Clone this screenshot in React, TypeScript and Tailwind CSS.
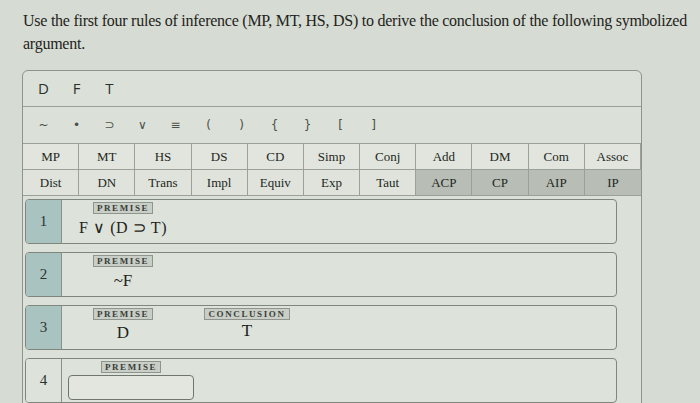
const letters = ['D', 'F', 'T']
const symbols = ['~', '•', '⊃', '∨', '≡', '(', ')', '{', '}', '[', ']']
const rulesTop = ['MP', 'MT', 'HS', 'DS', 'CD', 'Simp', 'Conj', 'Add', 'DM', 'Com', 'Assoc']
const rulesBottom = ['Dist', 'DN', 'Trans', 'Impl', 'Equiv', 'Exp', 'Taut', 'ACP', 'CP', 'AIP', 'IP']
const darkRules = ['ACP', 'CP', 'AIP', 'IP']

function Tag({ text }: { text: string }) {
  return (
    <span className="inline-block border border-[#8e958d] bg-[#c9cec6] px-[3px] text-[9px] leading-[10px] font-bold tracking-[1.6px] text-[#3a3f3b]">
      {text}
    </span>
  )
}

function Block({ label, children, width = 'w-[122px]' }: { label: string; children: React.ReactNode; width?: string }) {
  return (
    <div className={`${width} flex flex-col items-center pt-[2px]`}>
      <Tag text={label} />
      {children}
    </div>
  )
}

function ProofRow({ n, filled, children }: { n: number; filled: boolean; children: React.ReactNode }) {
  return (
    <div className="flex h-[45px] shrink-0 overflow-hidden rounded-[4px] border border-[#7f867e] bg-[#dde2da]">
      <div
        className={`flex w-[36px] shrink-0 items-center justify-center border-r border-[#8a918a] text-[15px] text-[#2d332f] ${
          filled ? 'bg-[#a9c3c1]' : 'bg-[#dde2da]'
        }`}
      >
        {n}
      </div>
      <div className="flex items-start gap-[2px]">{children}</div>
    </div>
  )
}

export default function App() {
  return (
    <div className="h-[403px] w-[700px] overflow-hidden bg-[#d6dcd3] font-['Liberation_Serif',serif] text-[#1e2320]">
      <p className="w-[690px] pl-[23px] pt-[9px] text-[16px] leading-[23px] tracking-[-0.25px]">
        Use the first four rules of inference (MP, MT, HS, DS) to derive the conclusion of the following symbolized argument.
      </p>

      <div className="ml-[22px] mt-[15px] w-[620px] rounded-t-[6px] border border-[#8d948c] bg-[#dbe0d8] pb-[20px]">
        {/* letters */}
        <div className="flex h-[36px] items-center border-b border-[#9ba199] pl-[4px] font-['Open_Sans',sans-serif] text-[15px] text-[#2b302c]">
          {letters.map((l) => (
            <span key={l} className="w-[33px] text-center">
              {l}
            </span>
          ))}
        </div>

        {/* symbols */}
        <div className="flex h-[36px] items-center pl-[4px] font-['DejaVu_Sans',sans-serif] text-[12px] text-[#4a504b]">
          {symbols.map((s) => (
            <span key={s} className="w-[33px] text-center">
              {s}
            </span>
          ))}
        </div>

        {/* rules */}
        <div className="grid grid-cols-11 border-t border-[#9ba199] text-[13px] text-[#222723]">
          {rulesTop.map((r) => (
            <div key={r} className="flex h-[26px] items-center justify-center border-b border-r border-[#9ba199] bg-[#e1e5dd] last:border-r-0">
              {r}
            </div>
          ))}
          {rulesBottom.map((r) => (
            <div
              key={r}
              className={`flex h-[26px] items-center justify-center border-b border-r border-[#9ba199] last:border-r-0 ${
                darkRules.includes(r) ? 'bg-[#b8beb5]' : 'bg-[#dfe3db]'
              }`}
            >
              {r}
            </div>
          ))}
        </div>

        {/* proof lines */}
        <div className="flex flex-col gap-[8px] pl-[2px] pr-[24px] pt-[3px]">
          <ProofRow n={1} filled>
            <Block label="PREMISE">
              <span className="mt-[4px] text-[16px] leading-[20px] tracking-[0.6px]">F ∨ (D ⊃ T)</span>
            </Block>
          </ProofRow>
          <ProofRow n={2} filled>
            <Block label="PREMISE">
              <span className="mt-[4px] text-[17px] leading-[20px]">~F</span>
            </Block>
          </ProofRow>
          <ProofRow n={3} filled>
            <Block label="PREMISE">
              <span className="mt-[3px] text-[17px] leading-[20px]">D</span>
            </Block>
            <Block label="CONCLUSION">
              <span className="mt-[1px] text-[17px] leading-[20px]">T</span>
            </Block>
          </ProofRow>
          <ProofRow n={4} filled={false}>
            <div className="ml-[6px]">
              <Block label="PREMISE" width="w-[126px]">
                <div className="mt-[2px] h-[25px] w-[126px] rounded-[4px] border border-[#6f766f] bg-[#e2e6de]" />
              </Block>
            </div>
          </ProofRow>
        </div>
      </div>
    </div>
  )
}
